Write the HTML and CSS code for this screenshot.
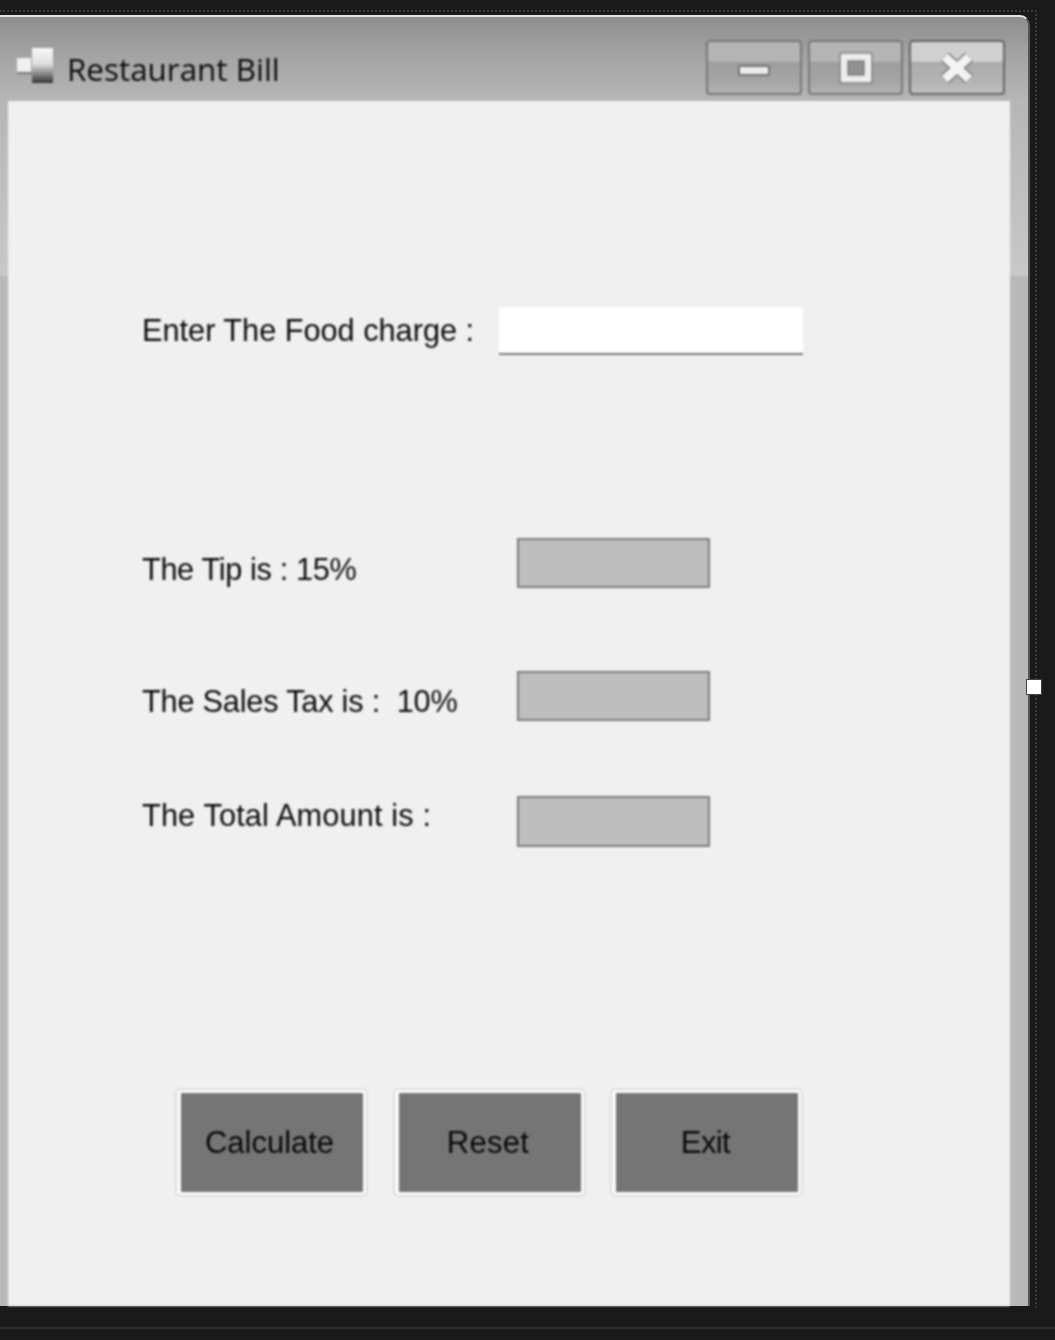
FILE: index.html
```html
<!DOCTYPE html>
<html lang="en">
<head>
    <meta charset="UTF-8">
    <title>Restaurant Bill</title>
    <link rel="stylesheet" href="styles.css">
</head>
<body>
    <div class="selection-line"></div>
    <div class="window">
        <div class="title-bar">
            <svg class="app-icon" width="40" height="40" viewBox="0 0 40 40">
                <defs>
                    <linearGradient id="iconBig" x1="0" y1="0" x2="0" y2="1">
                        <stop offset="0" stop-color="#f8f8f8"/>
                        <stop offset="0.45" stop-color="#e0e0e0"/>
                        <stop offset="1" stop-color="#343434"/>
                    </linearGradient>
                </defs>
                <rect x="18" y="3" width="21" height="35" fill="url(#iconBig)"/>
                <rect x="3" y="13" width="14" height="14" fill="#f0f0f0"/>
                <path d="M3 28H18" stroke="#666" stroke-width="1.5"/>
            </svg>
            <span class="title">Restaurant Bill</span>
            <div class="window-buttons">
                <div class="win-btn">
                    <svg class="min-icon" width="34" height="14" viewBox="0 0 34 14"><rect x="2" y="2" width="30" height="9" rx="1" fill="#ececec" stroke="#5a5a5a" stroke-width="1.5"/></svg>
                </div>
                <div class="win-btn win-btn-max">
                    <svg width="34" height="32" viewBox="0 0 34 32"><rect x="5" y="5" width="24" height="22" fill="#929292" stroke="#606060" stroke-width="9"/><rect x="5" y="5" width="24" height="22" fill="none" stroke="#ececec" stroke-width="7"/></svg>
                </div>
                <div class="win-btn win-btn-close">
                    <svg width="40" height="34" viewBox="0 0 40 34"><path d="M8 6L32 28M32 6L8 28" fill="none" stroke="#707070" stroke-width="11.5"/><path d="M8 6L32 28M32 6L8 28" fill="none" stroke="#f4f4f4" stroke-width="9"/></svg>
                </div>
            </div>
        </div>
        <div class="client">
            <div class="row row-food">
                <label class="label label-food">Enter The Food charge :</label>
                <div class="food-input"></div>
            </div>
            <div class="row row-tip">
                <label class="label label-tip">The Tip is : 15%</label>
                <div class="output"></div>
            </div>
            <div class="row row-tax">
                <label class="label label-tax">The Sales Tax is :&nbsp; 10%</label>
                <div class="output"></div>
            </div>
            <div class="row row-total">
                <label class="label label-total">The Total Amount is :</label>
                <div class="output"></div>
            </div>
            <div class="actions">
                <button class="action action-calc">Calculate</button>
                <button class="action action-reset">Reset</button>
                <button class="action action-exit">Exit</button>
            </div>
        </div>
        <div class="resize-handle"></div>
    </div>
    <div class="bottom-line"></div>
</body>
</html>
```

FILE: styles.css
```css
html, body {
    margin: 0;
    padding: 0;
}
body {
    width: 1055px;
    height: 1340px;
    padding-top: 15px;
    box-sizing: border-box;
    overflow: hidden;
    background-color: #1a1a1a;
    font-family: "Liberation Sans", Arial, sans-serif;
    position: relative;
}
.selection-line {
    position: absolute;
    left: 0;
    top: 10px;
    width: 1035px;
    height: 1296px;
    border-top: 2px dotted #3a3a3a;
    border-right: 2px dotted #3a3a3a;
}
.window {
    position: relative;
    width: 1030px;
    height: 1291px;
    box-sizing: border-box;
    padding: 0 18px 0 8px;
    border-top: 2px solid #e4e4e4;
    border-right: 2px solid #555;
    border-top-right-radius: 10px;
    background: linear-gradient(180deg, #8e8e8e 0, #a4a4a4 40px, #b6b6b6 84px, #c8c8c8 258px, #b8b8b8 260px);
}
.title-bar {
    height: 84px;
    margin-left: -8px;
    margin-right: -18px;
    padding: 0 23px 0 14px;
    display: flex;
    align-items: center;
    filter: blur(0.8px);
}
.app-icon {
    margin-top: 12px;
}
.title {
    margin-left: 13px;
    margin-top: 18px;
    font-family: "Open Sans", "Noto Sans", sans-serif;
    font-size: 31.4px;
    color: #0c0c0c;
}
.window-buttons {
    margin-left: auto;
    margin-top: 17px;
    display: flex;
    gap: 6px;
}
.win-btn {
    width: 96px;
    height: 55px;
    box-sizing: border-box;
    border: 2px solid #777;
    border-radius: 4px;
    background: linear-gradient(180deg, #b4b4b4 0, #b4b4b4 38%, #9e9e9e 39%, #a6a6a6 80%, #b2b2b2 100%);
    display: flex;
    align-items: center;
    justify-content: center;
}
.win-btn-max {
    width: 95px;
}
.min-icon {
    margin-top: 7px;
}
.win-btn-close {
    border-color: #666;
    background: linear-gradient(180deg, #d0d0d0 0, #d0d0d0 38%, #ababab 39%, #b4b4b4 80%, #c0c0c0 100%);
}
.client {
    height: 1205px;
    box-sizing: border-box;
    padding: 206px 0 0 134px;
    background-color: #f0f0f0;
    filter: blur(0.8px);
}
.row {
    display: flex;
    align-items: flex-start;
}
.row-tip {
    margin-top: 183px;
}
.row-tax {
    margin-top: 83px;
}
.row-total {
    margin-top: 75px;
}
.label {
    width: 375px;
    flex: none;
    font-size: 30.7px;
    line-height: 36px;
    color: #0a0a0a;
}
.label-food {
    width: 357px;
    margin-top: 6px;
}
.label-tip {
    margin-top: 14px;
    letter-spacing: -0.35px;
}
.label-tax {
    margin-top: 13px;
    letter-spacing: -0.2px;
}
.label-total {
    margin-top: 2px;
    letter-spacing: 0.15px;
}
.food-input {
    width: 304px;
    height: 48px;
    box-sizing: border-box;
    background-color: #fff;
    border-bottom: 2px solid #777;
}
.output {
    width: 193px;
    height: 51px;
    box-sizing: border-box;
    background-color: #bdbdbd;
    border: 2px solid #7c7c7c;
}
.row-tip .output,
.row-tax .output {
    height: 50px;
}
.actions {
    margin-top: 242px;
    margin-left: 34px;
    display: flex;
    gap: 26.5px;
}
.action {
    width: 191px;
    height: 107px;
    box-sizing: border-box;
    padding: 0;
    background-color: #757575;
    border: 4px solid #fafafa;
    border-left-width: 5px;
    outline: 2px solid #dedede;
    outline-offset: -1px;
    border-radius: 5px;
    font-family: "Liberation Sans", Arial, sans-serif;
    font-size: 31px;
    color: #080808;
}
.action-calc {
    padding-right: 5px;
}
.action-reset {
    padding-right: 3px;
    letter-spacing: 0.3px;
}
.action-exit {
    padding-right: 3px;
    letter-spacing: -0.6px;
}
.resize-handle {
    position: absolute;
    left: 1026px;
    top: 662px;
    width: 16px;
    height: 16px;
    box-sizing: border-box;
    background-color: #fff;
    border: 1px solid #444;
}
.bottom-line {
    margin-top: 21px;
    height: 2px;
    background-color: #2e2e2e;
}
```
